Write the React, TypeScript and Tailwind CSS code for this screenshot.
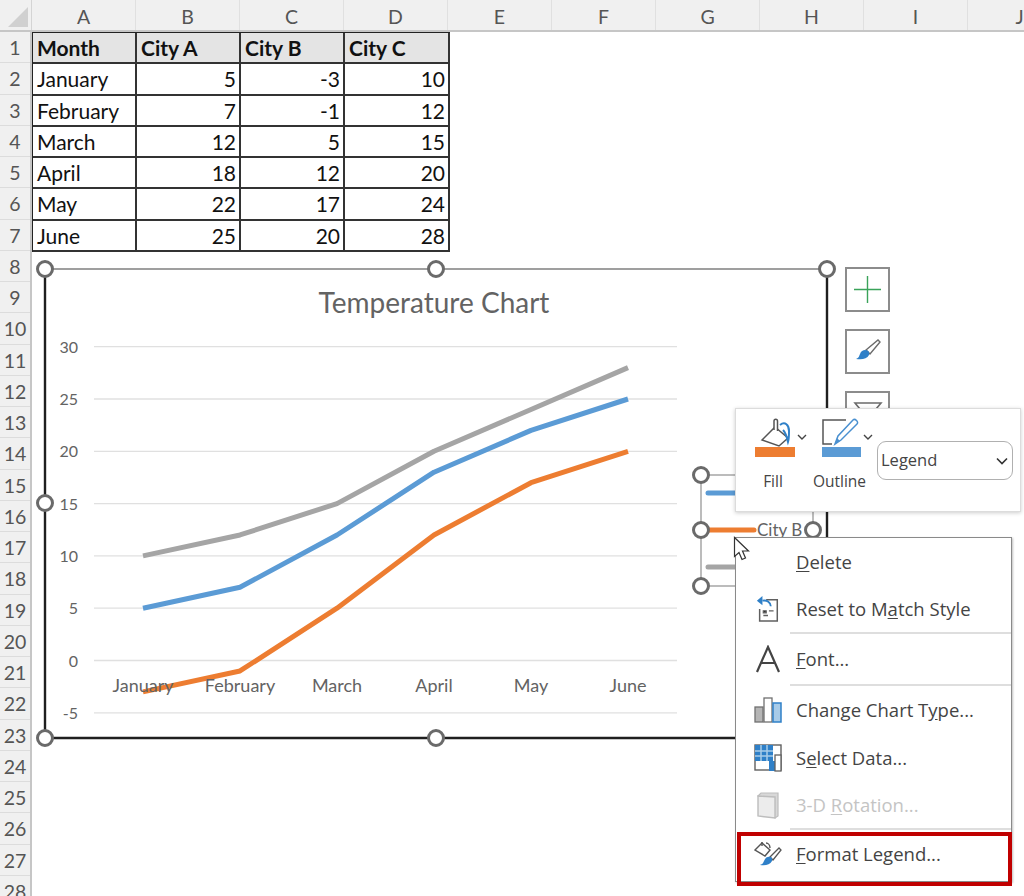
import React from 'react';

const columns = ['A', 'B', 'C', 'D', 'E', 'F', 'G', 'H', 'I', 'J'];
const rowNumbers = Array.from({ length: 28 }, (_, i) => i + 1);

const tableRows: [string, number, number, number][] = [
  ['January', 5, -3, 10],
  ['February', 7, -1, 12],
  ['March', 12, 5, 15],
  ['April', 18, 12, 20],
  ['May', 22, 17, 24],
  ['June', 25, 20, 28],
];

// chart geometry, in page pixels
const pointX = [143, 240, 337, 434, 531, 628];
const valueY = (v: number) => 660.5 - v * 10.46;
const linePoints = (col: number) =>
  tableRows.map((row, i) => `${pointX[i]},${valueY(row[col] as number)}`).join(' ');

const Handle = ({ x, y }: { x: number; y: number }) => (
  <circle cx={x} cy={y} r={7.5} fill="#fff" stroke="#6a6a6a" strokeWidth={3} />
);

const Chart = () => (
  <svg className="absolute left-0 top-0" width={1024} height={896}>
    <g stroke="#7f7f7f" strokeWidth={1.5}>
      <line x1={45} y1={269} x2={827} y2={269} />
    </g>
    <g stroke="#1f1f1f" strokeWidth={2.4}>
      <line x1={45} y1={269} x2={45} y2={738} />
      <line x1={827} y1={269} x2={827} y2={738} />
      <line x1={45} y1={738} x2={827} y2={738} />
    </g>
    <text x={434} y={313} textAnchor="middle" fontSize={28} fill="#636363" fontFamily="Lato, sans-serif">
      Temperature Chart
    </text>
    {[30, 25, 20, 15, 10, 5, 0, -5].map((v) => (
      <g key={v}>
        <line x1={94} x2={677} y1={valueY(v)} y2={valueY(v)} stroke="#e0e0e0" strokeWidth={1.3} />
        <text x={78} y={valueY(v) + 6} textAnchor="end" fontSize={16} fill="#636363" fontFamily="Lato, sans-serif">
          {v}
        </text>
      </g>
    ))}
    <polyline points={linePoints(3)} fill="none" stroke="#a5a5a5" strokeWidth={5} strokeLinejoin="round" />
    <polyline points={linePoints(1)} fill="none" stroke="#5b9bd5" strokeWidth={5} strokeLinejoin="round" />
    <polyline points={linePoints(2)} fill="none" stroke="#ed7d31" strokeWidth={5} strokeLinejoin="round" />
    {tableRows.map((row, i) => (
      <text key={row[0]} x={pointX[i]} y={692} textAnchor="middle" fontSize={18} fill="#636363" fontFamily="Lato, sans-serif">
        {row[0]}
      </text>
    ))}
    {/* legend */}
    <rect x={701} y={475} width={112} height={111} fill="none" stroke="#a6a6a6" strokeWidth={1.5} />
    <line x1={708} y1={493} x2={754} y2={493} stroke="#5b9bd5" strokeWidth={5} strokeLinecap="round" />
    <line x1={708} y1={530} x2={754} y2={530} stroke="#ed7d31" strokeWidth={5} strokeLinecap="round" />
    <line x1={708} y1={567} x2={754} y2={567} stroke="#a5a5a5" strokeWidth={5} strokeLinecap="round" />
    <text x={757} y={536} fontSize={17} fill="#636363" fontFamily="Lato, sans-serif">
      City B
    </text>
    <Handle x={45} y={269} />
    <Handle x={436} y={269} />
    <Handle x={827} y={269} />
    <Handle x={45} y={503} />
    <Handle x={45} y={738} />
    <Handle x={436} y={738} />
    <Handle x={701} y={475} />
    <Handle x={701} y={530} />
    <Handle x={701} y={586} />
    <Handle x={813} y={530} />
  </svg>
);

const SideButtons = () => (
  <div className="absolute left-[845px] top-[267px] flex flex-col gap-[17px]">
    <div className="flex h-[45px] w-[45px] items-center justify-center border-2 border-[#8c8c8c] bg-white">
      <svg width={29} height={29} viewBox="0 0 29 29">
        <path d="M14.5 1v27M1 14.5h27" stroke="#3aa35a" strokeWidth={1.4} />
      </svg>
    </div>
    <div className="flex h-[45px] w-[45px] items-center justify-center border-2 border-[#8c8c8c] bg-white">
      <svg width={30} height={30} viewBox="0 0 30 30">
        <path d="M13 13L25 3l2 2-10 12z" fill="#fff" stroke="#6b6b6b" strokeWidth={1.4} />
        <path d="M12 13c4 0 5 3 4 5-2 4-7 5-13 4 3-1 3-3 4-5 1-3 3-4 5-4z" fill="#2f80c8" />
      </svg>
    </div>
    <div className="flex h-[45px] w-[45px] items-start justify-center border-2 border-[#8c8c8c] bg-white pt-2">
      <svg width={30} height={30} viewBox="0 0 30 30">
        <path d="M2 2h26l-10 12v14h-6V14z" fill="#fff" stroke="#6b6b6b" strokeWidth={1.6} />
      </svg>
    </div>
  </div>
);

const FormatBar = () => (
  <div className="absolute left-[735px] top-[408px] h-[104px] w-[286px] border border-[#dcdcdc] bg-white shadow-[0_1px_4px_rgba(0,0,0,0.2)] font-['Open_Sans',sans-serif] text-[15.5px] text-[#444]">
    <div className="flex items-start pl-[18px] pt-[9px]">
      <div className="flex w-[60px] shrink-0 flex-col items-center">
        <svg width={60} height={40} viewBox="0 0 60 40">
          <path d="M8 22L21 9l13 11-9 8z" fill="#fff" stroke="#555" strokeWidth={1.5} />
          <path d="M20 12V3c0-2.5 3.5-2.5 3.5 0v10" fill="#fff" stroke="#555" strokeWidth={1.5} />
          <path d="M26 7c5-4 9 0 9 6 0 4 0 8-1 11-1-4-2-9-5-12" fill="none" stroke="#2f80c8" strokeWidth={2} />
          <rect x={1} y={29} width={40} height={10} fill="#ed7d31" />
          <path d="M44 17l4 4 4-4" fill="none" stroke="#444" strokeWidth={1.4} />
        </svg>
        <span className="mt-[13px] mr-[22px] leading-[20px]">Fill</span>
      </div>
      <div className="ml-[5px] flex w-[60px] shrink-0 flex-col items-center">
        <svg width={60} height={40} viewBox="0 0 60 40">
          <path d="M27 2H4v24h9" fill="none" stroke="#555" strokeWidth={1.5} />
          <path d="M16 26l3-8L34 2c2-2 6 2 4 4L22 22z" fill="#fff" stroke="#4a90d0" strokeWidth={1.5} />
          <path d="M16 26l2-6 3 3z" fill="#4a90d0" />
          <rect x={3} y={29} width={39} height={10} fill="#5b9bd5" />
          <path d="M45 17l4 4 4-4" fill="none" stroke="#444" strokeWidth={1.4} />
        </svg>
        <span className="mt-[13px] mr-[19px] whitespace-nowrap leading-[20px]">Outline</span>
      </div>
      <div className="ml-[-2px] mt-[23px] flex h-[39px] w-[136px] shrink-0 items-center justify-between rounded-[9px] border border-[#b0b0b0] pl-[3px] pr-[2px] text-[16.5px]">
        <span>Legend</span>
        <svg width={16} height={16} viewBox="0 0 16 16">
          <path d="M3 5.5l5 5 5-5" fill="none" stroke="#333" strokeWidth={1.6} />
        </svg>
      </div>
    </div>
  </div>
);

const MenuLabel = ({ before, mark, after }: { before?: string; mark: string; after?: string }) => (
  <span>
    {before}
    <span className="underline underline-offset-2">{mark}</span>
    {after}
  </span>
);

const MenuRow = ({ icon, h, children }: { icon?: React.ReactNode; h: string; children: React.ReactNode }) => (
  <div className={`flex items-center ${h}`}>
    <div className="flex w-[60px] shrink-0 justify-center pl-[4px]">{icon}</div>
    {children}
  </div>
);

const MenuDivider = () => <div className="ml-[54px] h-[2px] bg-[#dedede]" />;

const ResetIcon = () => (
  <svg width={26} height={30} viewBox="0 0 28 30">
    <path d="M12 5h12v23H5V15" fill="none" stroke="#606060" strokeWidth={1.6} />
    <path d="M17 12c0-4-4-7-9-6" fill="none" stroke="#2f80c8" strokeWidth={2} />
    <path d="M8 1L2 6l6 5z" fill="#2f80c8" />
    <path d="M9 17h3v2H9zM15 17h5M9 22h5" stroke="#606060" strokeWidth={1.5} />
  </svg>
);

const FontIcon = () => (
  <svg width={26} height={28} viewBox="0 0 26 28">
    <path d="M2 27L13 2l11 25M6 18h14" fill="none" stroke="#444" strokeWidth={2.2} />
  </svg>
);

const ChartTypeIcon = () => (
  <svg width={28} height={28} viewBox="0 0 28 28">
    <rect x={1} y={11} width={8} height={15} fill="#b5b5b5" stroke="#707070" strokeWidth={1.3} />
    <rect x={10} y={2} width={8} height={24} fill="#fff" stroke="#707070" strokeWidth={1.3} />
    <rect x={19} y={7} width={8} height={19} fill="#a8cbe8" stroke="#2f80c8" strokeWidth={1.5} />
  </svg>
);

const SelectDataIcon = () => (
  <svg width={28} height={28} viewBox="0 0 28 28">
    <rect x={1} y={1} width={26} height={25} fill="#fff" stroke="#606060" strokeWidth={1.4} />
    <rect x={1} y={1} width={18} height={16} fill="#2f80c8" />
    <path d="M7 1v16M13 1v16M1 7h18M1 12h18" stroke="#a8cbe8" strokeWidth={1.5} />
    <rect x={15} y={17} width={6} height={10} fill="#2f80c8" />
    <rect x={21} y={11} width={6} height={16} fill="#fff" stroke="#606060" strokeWidth={1.3} />
  </svg>
);

const RotationIcon = () => (
  <svg width={24} height={28} viewBox="0 0 24 28">
    <path d="M2 5l3-3h17v23l-3 2z" fill="#d8d8d8" stroke="#bdbdbd" strokeWidth={1.2} />
    <path d="M2 5l17 1v21L2 25z" fill="#ececec" stroke="#bdbdbd" strokeWidth={1.4} />
  </svg>
);

const FormatIcon = () => (
  <svg width={28} height={28} viewBox="0 0 28 28">
    <path d="M1 10l7-7 8 7-5 6z" fill="#fff" stroke="#555" strokeWidth={1.4} />
    <path d="M8 6V2M12 3c2 0 4 2 4 5" fill="none" stroke="#555" strokeWidth={1.4} />
    <path d="M16 17L25 8l2 2-8 10z" fill="#fff" stroke="#555" strokeWidth={1.3} />
    <path d="M14 17c3-1 5 1 4 4-2 4-7 5-12 4 3-1 3-2 4-4 1-2 2-4 4-4z" fill="#2f80c8" />
  </svg>
);

const ContextMenu = () => (
  <div className="absolute left-[735px] top-[537px] h-[345px] w-[277px] border border-[#8a8a8a] bg-white font-['Open_Sans',sans-serif] text-[18.5px] text-[#444] shadow-[1px_1px_2px_rgba(0,0,0,0.25)]">
    <MenuRow h="h-[47px]">
      <MenuLabel mark="D" after="elete" />
    </MenuRow>
    <MenuRow h="h-[47px]" icon={<ResetIcon />}>
      <MenuLabel before="Reset to M" mark="a" after="tch Style" />
    </MenuRow>
    <MenuDivider />
    <MenuRow h="h-[50px]" icon={<FontIcon />}>
      <MenuLabel mark="F" after="ont..." />
    </MenuRow>
    <MenuDivider />
    <MenuRow h="h-[48px]" icon={<ChartTypeIcon />}>
      <MenuLabel before="Change Chart T" mark="y" after="pe..." />
    </MenuRow>
    <MenuRow h="h-[47px]" icon={<SelectDataIcon />}>
      <MenuLabel before="S" mark="e" after="lect Data..." />
    </MenuRow>
    <MenuRow h="h-[47px]" icon={<RotationIcon />}>
      <span className="text-[#c4c4c4]">
        <MenuLabel before="3-D " mark="R" after="otation..." />
      </span>
    </MenuRow>
    <MenuDivider />
    <MenuRow h="h-[48px]" icon={<FormatIcon />}>
      <MenuLabel mark="F" after="ormat Legend..." />
    </MenuRow>
  </div>
);

const Cursor = () => (
  <svg className="absolute left-[733px] top-[536px]" width={18} height={28} viewBox="0 0 18 28">
    <path d="M1.5 1.5v19l4.5-4 3 7 3.5-1.5-3-7h6z" fill="#fff" stroke="#333" strokeWidth={1.2} />
  </svg>
);

export default function App() {
  return (
    <div className="relative h-[896px] w-[1024px] overflow-hidden bg-white font-['Lato',sans-serif]">
      {/* column headers */}
      <div className="flex h-[32px] border-b-2 border-[#c6c6c6] bg-[#f0f0f0] text-[19.5px] text-[#555]">
        <div className="flex w-[32px] shrink-0 items-end justify-end border-r border-[#d4d4d4] p-[3px]">
          <div className="h-0 w-0 border-b-[20px] border-l-[20px] border-b-[#d0d0d0] border-l-transparent" />
        </div>
        {columns.map((c) => (
          <div key={c} className="flex w-[104px] shrink-0 items-center justify-center border-r border-[#e0e0e0] pt-[3px]">
            {c}
          </div>
        ))}
      </div>

      <div className="flex">
        {/* row headers */}
        <div className="w-[32px] shrink-0 border-r-2 border-[#c6c6c6] bg-[#f0f0f0] text-[19.5px] leading-[24px] text-[#555]">
          {rowNumbers.map((n) => (
            <div key={n} className="flex h-[31.25px] items-center justify-center border-b border-[#dcdcdc] pt-[2px]">
              {n}
            </div>
          ))}
        </div>

        {/* data table */}
        <div className="h-fit border-l border-t border-[#222] text-[21px] leading-[24px] text-[#111]">
          <div className="grid h-[31.25px] grid-cols-[104px_104px_104px_105px] bg-[#e4e4e4] font-bold">
            {['Month', 'City A', 'City B', 'City C'].map((h) => (
              <div key={h} className="flex items-center border-b-2 border-r-2 border-[#333] pl-[4px] pt-[1px]">
                {h}
              </div>
            ))}
          </div>
          {tableRows.map((row) => (
            <div key={row[0]} className="grid h-[31.25px] grid-cols-[104px_104px_104px_105px]">
              <div className="flex items-center border-b-2 border-r-2 border-[#333] pl-[4px] pt-[1px]">{row[0]}</div>
              {row.slice(1).map((v, i) => (
                <div key={i} className="flex items-center justify-end border-b-2 border-r-2 border-[#333] pr-[3px] pt-[1px]">
                  {v}
                </div>
              ))}
            </div>
          ))}
        </div>
      </div>

      <Chart />
      <SideButtons />
      <FormatBar />
      <ContextMenu />
      <Cursor />
      {/* red annotation round the last item */}
      <div className="absolute left-[737px] top-[832px] h-[54px] w-[275px] border-4 border-[#c00000]" />
    </div>
  );
}
